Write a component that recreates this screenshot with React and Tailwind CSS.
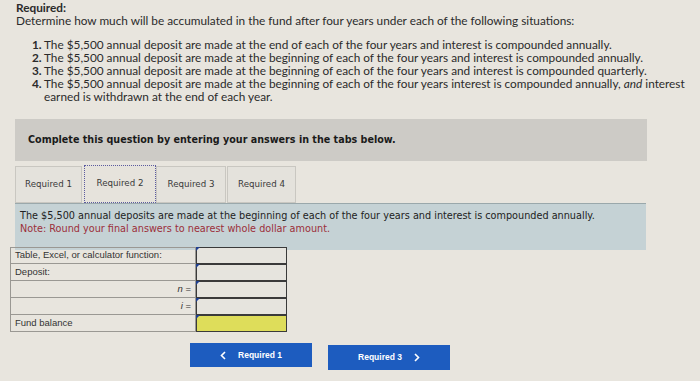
import React from "react";

const items = [
  "The $5,500 annual deposit are made at the end of each of the four years and interest is compounded annually.",
  "The $5,500 annual deposit are made at the beginning of each of the four years and interest is compounded annually.",
  "The $5,500 annual deposit are made at the beginning of each of the four years and interest is compounded quarterly.",
];

function InputCell({ yellow }) {
  return (
    <div
      className={`relative h-full border-[1.5px] border-[#3a3a3a] ${
        yellow ? "bg-[#dedd5a]" : "bg-[#e6e4de]"
      }`}
    >
      <span className="absolute left-[-1px] top-[-1px] w-0 h-0 border-t-[4px] border-t-[#1f3f8f] border-r-[4px] border-r-transparent" />
    </div>
  );
}

export default function App() {
  const rows = [
    { label: "Table, Excel, or calculator function:", align: "left" },
    { label: "Deposit:", align: "left" },
    { label: "n =", align: "right", italic: true },
    { label: "i =", align: "right", italic: true },
    { label: "Fund balance", align: "left", yellow: true },
  ];
  return (
    <div className="w-[700px] h-[381px] overflow-hidden bg-[#e8e5de] text-[#2b2b2b]">
      <div className="pl-[16px] pt-[1px] font-['Lato',sans-serif] text-[11.8px] leading-[13px]">
        <p className="font-bold">Required:</p>
        <p>Determine how much will be accumulated in the fund after four years under each of the following situations:</p>
        <ol className="mt-[11px] pl-[16px]">
          {items.map((t, i) => (
            <li key={i} className="flex">
              <span className="w-[12px] shrink-0 font-bold">{i + 1}.</span>
              <span>{t}</span>
            </li>
          ))}
          <li className="flex">
            <span className="w-[12px] shrink-0 font-bold">4.</span>
            <span>
              The $5,500 annual deposit are made at the beginning of each of the four years interest is compounded annually, <i>and</i> interest
              <br />
              earned is withdrawn at the end of each year.
            </span>
          </li>
        </ol>
      </div>

      <div className="ml-[15px] mt-[16px] w-[632px] h-[42px] bg-[#cdcbc6] flex items-center pl-[13px] font-['DejaVu_Sans',sans-serif] font-bold text-[9.6px] text-[#1a1a1a]">
        Complete this question by entering your answers in the tabs below.
      </div>

      <div className="ml-[15px] mt-[4px] flex items-end h-[38px] font-['DejaVu_Sans',sans-serif] text-[8.7px] text-[#3a3a3a]">
        <div className="w-[67px] h-[37px] border border-[#c9c7c1] bg-[#e4e2dc] flex items-center justify-center">Required 1</div>
        <div className="ml-[2px] w-[72px] h-[38px] border border-dotted border-[#5b5ba0] bg-[#e6e3dc] flex items-center justify-center">Required 2</div>
        <div className="w-[70px] h-[37px] border border-[#c9c7c1] bg-[#e4e2dc] flex items-center justify-center">Required 3</div>
        <div className="ml-[1px] w-[69px] h-[37px] border border-[#c9c7c1] bg-[#e4e2dc] flex items-center justify-center">Required 4</div>
      </div>

      <div className="ml-[15px] w-[631px] h-[47px] bg-[#c5d2d5] border-t border-[#9aa8ab] pl-[5px] pt-[6px] font-['DejaVu_Sans',sans-serif] text-[9.7px] leading-[12.5px]">
        <p className="text-[#222]">The $5,500 annual deposits are made at the beginning of each of the four years and interest is compounded annually.</p>
        <p className="text-[#9c2f3a]">Note: Round your final answers to nearest whole dollar amount.</p>
      </div>

      <div className="ml-[10px] mt-[-3px] w-[277px] font-['Liberation_Sans',sans-serif] text-[9.5px] text-[#333]">
        {rows.map((r, i) => (
          <div key={i} className="flex h-[17px]">
            <div
              className={`w-[186px] border border-[#9a9893] ${i > 0 ? "border-t-0" : ""} flex items-center px-[4px] ${
                r.align === "right" ? "justify-end" : ""
              }`}
            >
              {r.italic ? (
                <span>
                  <i>{r.label.split(" ")[0]}</i> =
                </span>
              ) : (
                r.label
              )}
            </div>
            <div className="w-[91px] h-[17px]">
              <InputCell yellow={r.yellow} />
            </div>
          </div>
        ))}
      </div>

      <div className="mt-[11px] ml-[190px] flex items-start gap-[16px] font-['Liberation_Sans',sans-serif] font-bold text-[8.5px] text-white">
        <div className="w-[122px] h-[24px] bg-[#1d5cbf] flex items-center justify-center gap-[12px]">
          <svg width="6" height="9" viewBox="0 0 6 9" fill="none" stroke="white" strokeWidth="1.6">
            <path d="M5 1 L1.5 4.5 L5 8" />
          </svg>
          <span>Required 1</span>
        </div>
        <div className="mt-[2px] w-[122px] h-[25px] bg-[#1d5cbf] flex items-center justify-center gap-[12px]">
          <span>Required 3</span>
          <svg width="6" height="9" viewBox="0 0 6 9" fill="none" stroke="white" strokeWidth="1.6">
            <path d="M1 1 L4.5 4.5 L1 8" />
          </svg>
        </div>
      </div>
    </div>
  );
}
